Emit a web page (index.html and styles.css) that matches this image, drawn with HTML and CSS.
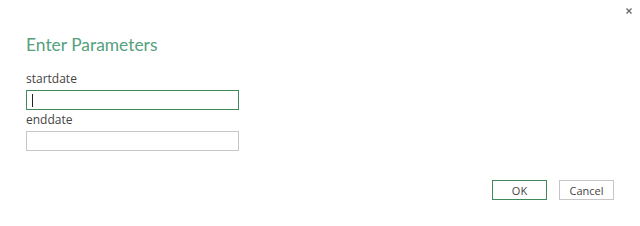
FILE: index.html
```html
<!DOCTYPE html>
<html>
<head>
<meta charset="utf-8">
<link rel="stylesheet" href="styles.css">
</head>
<body>
<div class="dialog">
  <div class="topbar">
    <svg class="close" width="6" height="6" viewBox="0 0 6 6"><path d="M0.5 0.5L5.5 5.5M5.5 0.5L0.5 5.5" stroke="#6b6b6b" stroke-width="1.4"/></svg>
  </div>
  <h1 class="title">Enter Parameters</h1>
  <div class="fields">
    <div class="field">
      <div class="label">startdate</div>
      <div class="input focused"><span class="caret"></span></div>
    </div>
    <div class="field">
      <div class="label">enddate</div>
      <div class="input"></div>
    </div>
  </div>
  <div class="actions">
    <button class="btn primary">OK</button>
    <button class="btn">Cancel</button>
  </div>
</div>
</body>
</html>
```
FILE: styles.css
```css
html, body {
  margin: 0;
  padding: 0;
  background: #ffffff;
}
.dialog {
  width: 640px;
  height: 226px;
  display: flex;
  flex-direction: column;
  font-family: "Open Sans", "Noto Sans", sans-serif;
  color: #444444;
}
.topbar {
  display: flex;
  justify-content: flex-end;
  padding: 8px 8px 0 0;
  height: 6px;
}
.close {
  display: block;
}
.title {
  margin: 19px 0 0 26px;
  font-family: "Lato", "Open Sans", sans-serif;
  font-size: 17.4px;
  line-height: 24px;
  font-weight: 400;
  color: #55a07d;
}
.fields {
  margin: 14px 0 0 26px;
  display: flex;
  flex-direction: column;
}
.field {
  display: flex;
  flex-direction: column;
}
.label {
  font-size: 12px;
  line-height: 16px;
  color: #444444;
}
.input {
  margin-top: 3px;
  width: 213px;
  height: 20px;
  box-sizing: border-box;
  border: 1px solid #c6c6c6;
  display: flex;
  align-items: center;
  padding-left: 5px;
  margin-bottom: 2px;
}
.input.focused {
  border-color: #3f8a5b;
}
.caret {
  width: 1px;
  height: 13px;
  background: #222222;
}
.actions {
  display: flex;
  justify-content: flex-end;
  gap: 12px;
  margin: 27px 26px 0 0;
}
.btn {
  width: 55px;
  height: 20px;
  box-sizing: border-box;
  background: #ffffff;
  border: 1px solid #c6c6c6;
  font-family: "Open Sans", "Noto Sans", sans-serif;
  font-size: 11px;
  color: #444444;
  padding: 0;
}
.btn.primary {
  border-color: #3f8a5b;
}
```
